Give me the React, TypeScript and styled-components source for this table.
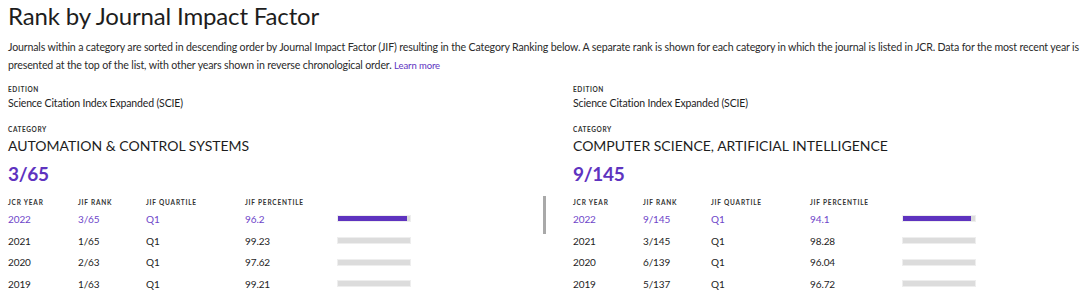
import styled, { createGlobalStyle } from 'styled-components';

const GlobalStyle = createGlobalStyle`
  body {
    margin: 0;
    background: #fff;
    font-family: Lato, "Noto Sans", sans-serif;
    color: #1d1d1d;
  }
`;

interface RankRow {
  year: string;
  rank: string;
  quartile: string;
  percentile: number;
}

interface Category {
  edition: string;
  name: string;
  rank: string;
  rows: RankRow[];
}

const categories: Category[] = [
  {
    edition: 'Science Citation Index Expanded (SCIE)',
    name: 'AUTOMATION & CONTROL SYSTEMS',
    rank: '3/65',
    rows: [
      { year: '2022', rank: '3/65', quartile: 'Q1', percentile: 96.2 },
      { year: '2021', rank: '1/65', quartile: 'Q1', percentile: 99.23 },
      { year: '2020', rank: '2/63', quartile: 'Q1', percentile: 97.62 },
      { year: '2019', rank: '1/63', quartile: 'Q1', percentile: 99.21 },
    ],
  },
  {
    edition: 'Science Citation Index Expanded (SCIE)',
    name: 'COMPUTER SCIENCE, ARTIFICIAL INTELLIGENCE',
    rank: '9/145',
    rows: [
      { year: '2022', rank: '9/145', quartile: 'Q1', percentile: 94.1 },
      { year: '2021', rank: '3/145', quartile: 'Q1', percentile: 98.28 },
      { year: '2020', rank: '6/139', quartile: 'Q1', percentile: 96.04 },
      { year: '2019', rank: '5/137', quartile: 'Q1', percentile: 96.72 },
    ],
  },
];

function CategoryCard({ category, scrollable }: { category: Category; scrollable?: boolean }) {
  return (
    <Card>
      <Label>Edition</Label>
      <Edition>{category.edition}</Edition>
      <Label $spaced>Category</Label>
      <CategoryName>{category.name}</CategoryName>
      <BigRank>{category.rank}</BigRank>
      <TableWrap>
        <Table>
          <HeadRow>
            <Head>JCR Year</Head>
            <Head>JIF Rank</Head>
            <Head>JIF Quartile</Head>
            <Head>JIF Percentile</Head>
            <Head />
          </HeadRow>
          {category.rows.map((row, i) => (
            <Row key={row.year} $current={i === 0}>
              <Cell>{row.year}</Cell>
              <Cell>{row.rank}</Cell>
              <Cell>{row.quartile}</Cell>
              <Cell>{row.percentile}</Cell>
              <Cell>
                <Track>
                  {i === 0 && <Fill style={{ width: `${row.percentile}%` }} />}
                </Track>
              </Cell>
            </Row>
          ))}
        </Table>
        {scrollable && <ScrollThumb />}
      </TableWrap>
    </Card>
  );
}

export default function App() {
  return (
    <>
      <GlobalStyle />
      <Page>
        <Title>Rank by Journal Impact Factor</Title>
        <Intro>
          Journals within a category are sorted in descending order by Journal Impact Factor (JIF) resulting in the
          Category Ranking below. A separate rank is shown for each category in which the journal is listed in JCR.
          Data for the most recent year is
          <br />
          presented at the top of the list, with other years shown in reverse chronological order.{' '}
          <LearnMore href="#">Learn more</LearnMore>
        </Intro>
        <Columns>
          <CategoryCard category={categories[0]} scrollable />
          <CategoryCard category={categories[1]} />
        </Columns>
      </Page>
    </>
  );
}

const Page = styled.div`
  padding: 1px 0 0 8px;
`;

const Title = styled.h1`
  margin: 0;
  font-size: 24px;
  font-weight: 400;
  line-height: 30px;
  letter-spacing: -0.15px;
  color: #1d1d1d;
`;

const Intro = styled.p`
  margin: 7px 0 0;
  font-size: 10.6px;
  letter-spacing: -0.15px;
  line-height: 18px;
  white-space: nowrap;
  color: #2b2b2b;
`;

const LearnMore = styled.a`
  color: #5e33bf;
  font-size: 9.5px;
  letter-spacing: -0.1px;
  text-decoration: none;
`;

const Columns = styled.div`
  display: grid;
  grid-template-columns: 565px 1fr;
  margin-top: 10px;
`;

const Card = styled.div`
  display: flex;
  flex-direction: column;
`;

const Label = styled.div<{ $spaced?: boolean }>`
  margin-top: ${(p) => (p.$spaced ? '15px' : '0')};
  font-size: 6.5px;
  font-weight: 700;
  letter-spacing: 0.6px;
  text-transform: uppercase;
  line-height: 10px;
  color: #333;
`;

const Edition = styled.div`
  font-size: 10.5px;
  letter-spacing: -0.15px;
  line-height: 14px;
  margin-top: 1px;
`;

const CategoryName = styled.div`
  font-size: 14px;
  line-height: 18px;
  margin-top: 2px;
`;

const BigRank = styled.div`
  font-size: 19px;
  font-weight: 700;
  line-height: 24px;
  letter-spacing: -0.3px;
  margin-top: 7px;
  color: #5e33bf;
`;

const TableWrap = styled.div`
  position: relative;
  width: 540px;
  margin-top: 10px;
`;

const Table = styled.div`
  display: flex;
  flex-direction: column;
`;

const Columns5 = `
  display: grid;
  grid-template-columns: 70px 68px 99px 93px 72px;
  align-items: center;
`;

const HeadRow = styled.div`
  ${Columns5};
  height: 12px;
`;

const Head = styled.div`
  font-size: 6.5px;
  font-weight: 700;
  letter-spacing: 0.8px;
  text-transform: uppercase;
  color: #333;
`;

const Row = styled.div<{ $current?: boolean }>`
  ${Columns5};
  height: 21.7px;
  font-size: 10px;
  letter-spacing: -0.1px;
  color: ${(p) => (p.$current ? '#6e45c9' : '#1d1d1d')};
`;

const Cell = styled.div``;

const Track = styled.div`
  width: 72px;
  height: 5px;
  background: #dcdcdc;
  box-shadow: 0 0 0 1px #eee;
`;

const Fill = styled.div`
  height: 100%;
  background: #5e33bf;
`;

const ScrollThumb = styled.div`
  position: absolute;
  right: 2px;
  top: 0;
  width: 3px;
  height: 38px;
  background: #a9a9a9;
`;
